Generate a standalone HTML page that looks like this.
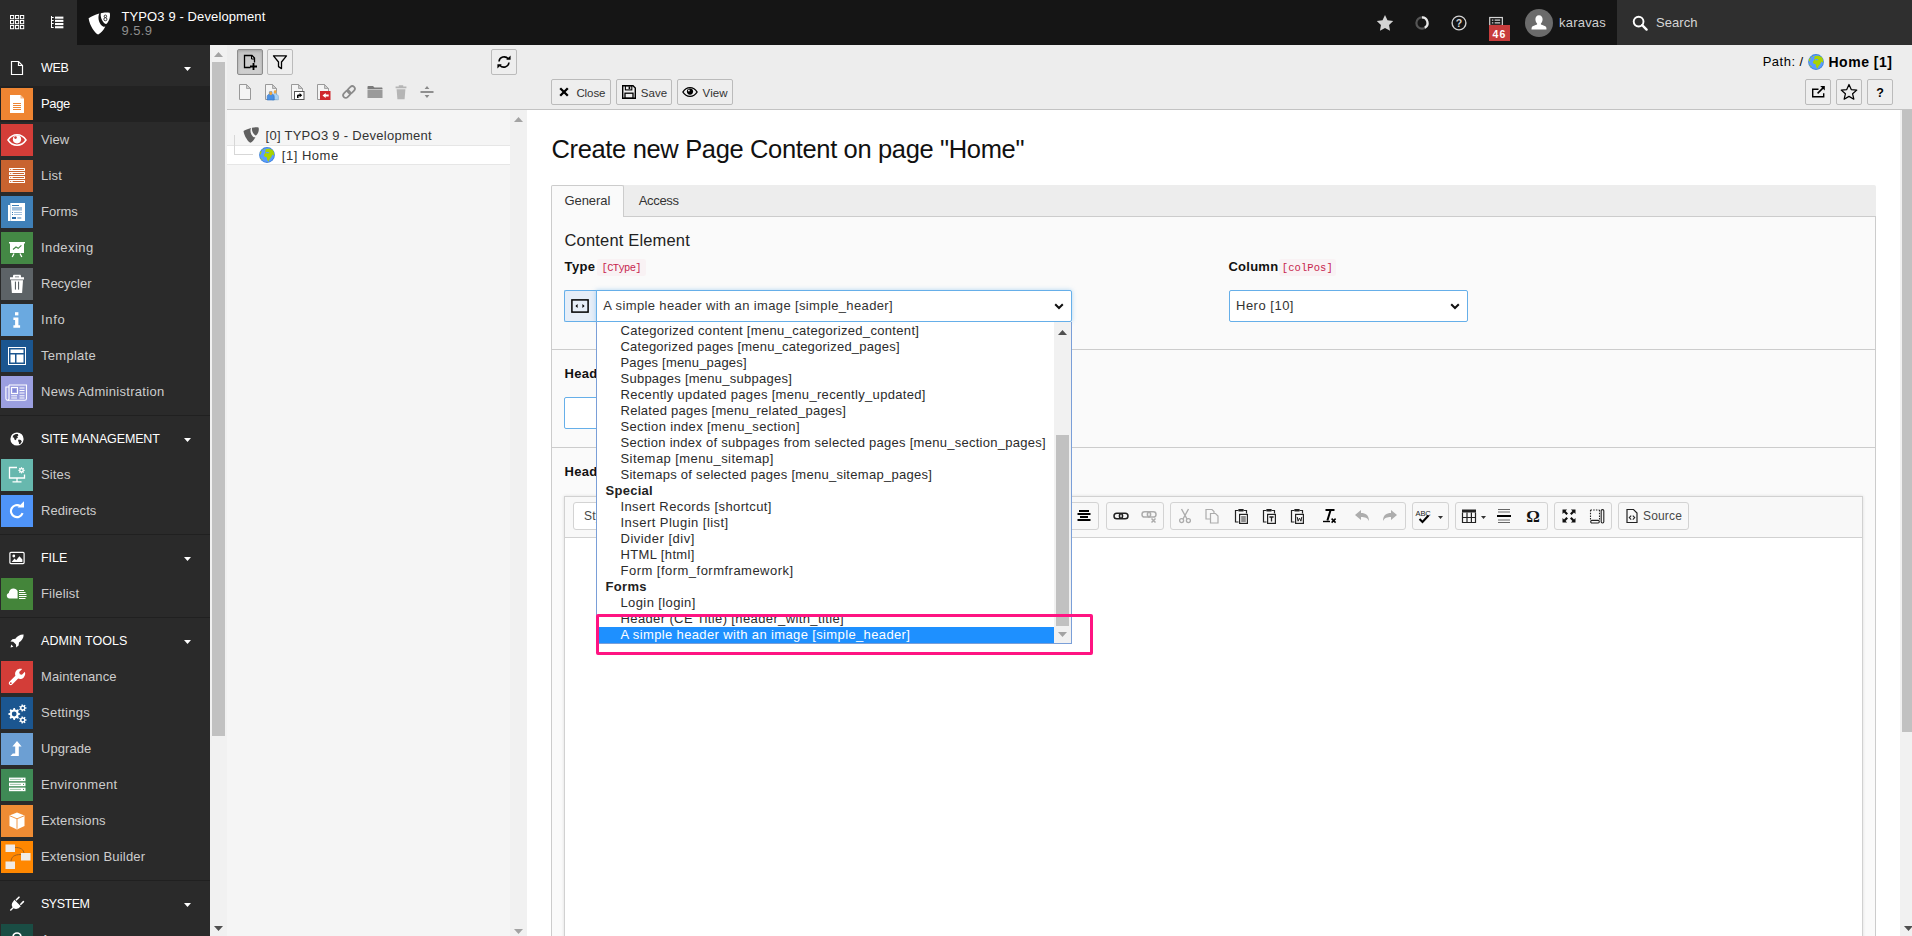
<!DOCTYPE html>
<html><head><meta charset="utf-8"><title>TYPO3</title><style>
*{box-sizing:border-box;margin:0;padding:0}
html,body{width:1912px;height:936px;overflow:hidden;background:#fff}
body{font-family:"Liberation Sans", sans-serif;font-size:13px;color:#333;position:relative}
.a{position:absolute}
.t{position:absolute;white-space:nowrap;line-height:16px;height:16px;font-size:13px}
.b{font-weight:bold}
svg{position:absolute;overflow:visible}
.btn{position:absolute;height:26px;border:1px solid #bbb;border-radius:2px;background:#eee}
.mono{font-family:"Liberation Mono",monospace}
</style></head><body>
<div class="a" style="left:0px;top:0px;width:1912px;height:45px;background:#151515"></div>
<div class="a" style="left:0px;top:0px;width:77px;height:45px;background:#2a2a2a"></div>
<div class="a" style="left:1617px;top:0px;width:295px;height:45px;background:#2f2f2f"></div>
<svg style="left:10px;top:15px;" width="14" height="14" viewBox="0 0 14 14"><rect x="0.5" y="0.5" width="3.2" height="3.2" fill="none" stroke="#fff" stroke-width="1"></rect><rect x="0.5" y="5.5" width="3.2" height="3.2" fill="none" stroke="#fff" stroke-width="1"></rect><rect x="0.5" y="10.5" width="3.2" height="3.2" fill="none" stroke="#fff" stroke-width="1"></rect><rect x="5.5" y="0.5" width="3.2" height="3.2" fill="none" stroke="#fff" stroke-width="1"></rect><rect x="5.5" y="5.5" width="3.2" height="3.2" fill="none" stroke="#fff" stroke-width="1"></rect><rect x="5.5" y="10.5" width="3.2" height="3.2" fill="none" stroke="#fff" stroke-width="1"></rect><rect x="10.5" y="0.5" width="3.2" height="3.2" fill="none" stroke="#fff" stroke-width="1"></rect><rect x="10.5" y="5.5" width="3.2" height="3.2" fill="none" stroke="#fff" stroke-width="1"></rect><rect x="10.5" y="10.5" width="3.2" height="3.2" fill="none" stroke="#fff" stroke-width="1"></rect></svg>
<svg style="left:50px;top:15px;" width="14" height="14" viewBox="0 0 14 14"><path d="M1.5 1v12M1.5 2.5h2.2M1.5 5.5h2.2M1.5 8.5h2.2M1.5 12.5h2.2" stroke="#fff" stroke-width="1" fill="none"></path><rect x="5" y="1.6" width="8.4" height="2.1" fill="#fff"></rect><rect x="5" y="4.8" width="8.4" height="2.1" fill="#fff"></rect><rect x="5" y="8" width="8.4" height="2.1" fill="#fff"></rect><rect x="5" y="11.2" width="8.4" height="2.1" fill="#fff"></rect></svg>
<svg style="left:88px;top:12px;" width="23" height="23" viewBox="0 0 23 23"><path d="M0.6 6.2C3 4.6 7 3 11.3 1.6C9.6 5 10.6 10.6 13.6 13.4C15 14.7 16.2 15 17.3 14.6C15.6 18.2 12.6 21.6 10.2 22.6C7.4 21.6 1.6 13.8 0.6 6.2z" fill="#fff"></path><path d="M12.8 1.2C15.2 0.4 19 0.2 21.6 0.8C22.8 3.4 21.4 9.6 18.2 12C15.4 11.6 12 6.2 12.8 1.2z" fill="#fff"></path><circle cx="17.4" cy="4.3" r="1.25" fill="none" stroke="#222" stroke-width=".9"></circle><circle cx="17.4" cy="7.2" r="1.55" fill="none" stroke="#222" stroke-width=".9"></circle></svg>
<span class="t " style="left: 121.5px; top: 8.5px; color: rgb(255, 255, 255); letter-spacing: 0.11px;">TYPO3 9 - Development</span>
<span class="t " style="left: 121.5px; top: 22.5px; color: rgb(142, 142, 142); letter-spacing: 0.42px;">9.5.9</span>
<svg style="left:1376px;top:13.5px;" width="18" height="18" viewBox="0 0 16 16"><path d="M8 .8l2.2 4.7 5.1.7-3.7 3.6.9 5.1L8 12.5l-4.5 2.4.9-5.1L.7 6.2l5.1-.7z" fill="#d4d4d4"></path></svg>
<svg style="left:1414px;top:15px;" width="16" height="16" viewBox="0 0 16 16"><circle cx="8" cy="8" r="5.6" fill="none" stroke="#555" stroke-width="2.2"></circle><path d="M8 2.4A5.6 5.6 0 0 1 10.8 12.8" fill="none" stroke="#e8e8e8" stroke-width="2.2"></path></svg>
<svg style="left:1451px;top:15px;" width="16" height="16" viewBox="0 0 16 16"><circle cx="8" cy="8" r="6.9" fill="none" stroke="#d4d4d4" stroke-width="1.4"></circle><text x="8" y="11.6" font-size="10.5" font-weight="bold" font-family="Liberation Sans" text-anchor="middle" fill="#d4d4d4">?</text></svg>
<svg style="left:1488.5px;top:15px;" width="15" height="13" viewBox="0 0 16 14"><rect x=".7" y="2.7" width="13.6" height="8.6" fill="none" stroke="#d4d4d4" stroke-width="1.3"></rect><path d="M3 5.5h1.6M6 5.5h6M3 8.5h1.6M6 8.5h6" stroke="#d4d4d4" stroke-width="1.3"></path></svg>
<div class="a" style="left:1489px;top:25px;width:21px;height:16px;background:#c83c3c"></div>
<span class="t b" style="left: 1492.5px; top: 25.5px; color: rgb(255, 255, 255); font-size: 10.5px; letter-spacing: 1.16px;">46</span>
<svg style="left:1525px;top:9px;" width="28" height="28" viewBox="0 0 28 28"><circle cx="14" cy="14" r="14" fill="#6b6b6b"></circle><path d="M14 6.2c2.3 0 3.6 1.7 3.6 4 0 1.8-.8 3.4-1.7 4.2v1.2c1.8.6 4.8 1.6 5.3 2.6.3.8.3 2.4.3 2.4H6.500000000000001s0-1.600000000000001.3-2.4c.5-1 3.5-2 5.3-2.6v-1.2c-.9-.8-1.7-2.4-1.7-4.2 0-2.3 1.3-4 3.6-4z" fill="#fff"></path></svg>
<span class="t " style="left: 1559px; top: 15px; color: rgb(208, 208, 208); letter-spacing: 0.21px;">karavas</span>
<svg style="left:1632px;top:15px;" width="16" height="16" viewBox="0 0 16 16"><circle cx="6.6" cy="6.6" r="4.9" fill="none" stroke="#fff" stroke-width="1.9"></circle><path d="M10.2 10.2L14.6 14.6" stroke="#fff" stroke-width="2.4" stroke-linecap="round"></path></svg>
<span class="t " style="left: 1656px; top: 15px; color: rgb(214, 214, 214); letter-spacing: 0.05px;">Search</span>
<div class="a" style="left:0px;top:45px;width:210px;height:891px;background:#2a2a2a"></div>
<div class="a" style="left:0px;top:86px;width:210px;height:36px;background:#222"></div>
<div class="a" style="left:210px;top:45px;width:17px;height:891px;background:#f1f1f1"></div>
<div class="a" style="left:212px;top:62px;width:13px;height:674px;background:#c1c1c1"></div>
<svg style="left:214.0px;top:51.5px;" width="9" height="5" viewBox="0 0 9 5"><path d="M0 5L4.5 0L9 5z" fill="#a3a3a3"></path></svg>
<svg style="left:214.0px;top:925.5px;" width="9" height="5" viewBox="0 0 9 5"><path d="M0 0L9 0L4.5 5z" fill="#505050"></path></svg>
<svg style="left:9px;top:60px;" width="16" height="16" viewBox="0 0 16 16"><path d="M2.5 1.5h7l4 4v9h-11z" fill="none" stroke="#fff" stroke-width="1.2"></path><path d="M9.5 1.5v4h4" fill="none" stroke="#fff" stroke-width="1.2"></path></svg>
<span class="t " style="left: 41px; top: 60px; font-size: 12.5px; color: rgb(255, 255, 255); letter-spacing: -0.29px;">WEB</span>
<svg style="left:184.0px;top:66.5px;" width="7" height="4" viewBox="0 0 7 4"><path d="M0 0L7 0L3.5 4z" fill="#fff"></path></svg>
<svg style="left:1px;top:88px" width="32" height="32" viewBox="0 0 32 32"><rect width="32" height="32" fill="#ef8532"></rect><path d="M9 7h10.5l3.5 3.5v14.500000000000002h-14.000000000000002z" fill="#fff"></path><path d="M19.5 7v3.5h3.5z" fill="#f6b98a"></path><rect x="12" y="15" width="8" height="1" fill="#ef8532"></rect><rect x="12" y="17" width="8" height="1" fill="#ef8532"></rect><rect x="12" y="19" width="8" height="1" fill="#ef8532"></rect><rect x="12" y="21" width="8" height="1" fill="#ef8532"></rect></svg>
<span class="t " style="left: 41px; top: 96px; color: rgb(255, 255, 255); letter-spacing: -0.34px;">Page</span>
<svg style="left:1px;top:124px" width="32" height="32" viewBox="0 0 32 32"><rect width="32" height="32" fill="#d33d38"></rect><path d="M7 16c2.4-3.6 5.4-5.2 9-5.2s6.6 1.6 9 5.2c-2.400000000000002 3.6-5.4 5.2-9 5.2s-6.6-1.6-9-5.2z" fill="none" stroke="#fff" stroke-width="1.5"></path><circle cx="16" cy="15.3" r="4.1" fill="#fff"></circle><circle cx="14.5" cy="13.6" r="1.3" fill="#d33d38"></circle></svg>
<span class="t " style="left: 41px; top: 132px; color: rgb(205, 205, 205); letter-spacing: 0.04px;">View</span>
<svg style="left:1px;top:160px" width="32" height="32" viewBox="0 0 32 32"><rect width="32" height="32" fill="#c8632f"></rect><rect x="8" y="8" width="16" height="3" rx=".5" fill="#fff"></rect><rect x="11.6" y="9" width="11.4" height="1" fill="#c8632f"></rect><rect x="9.2" y="9" width="1" height="1" fill="#c8632f"></rect><rect x="8" y="12" width="16" height="3" rx=".5" fill="#fff"></rect><rect x="11.6" y="13" width="11.4" height="1" fill="#c8632f"></rect><rect x="9.2" y="13" width="1" height="1" fill="#c8632f"></rect><rect x="8" y="16" width="16" height="3" rx=".5" fill="#fff"></rect><rect x="11.6" y="17" width="11.4" height="1" fill="#c8632f"></rect><rect x="9.2" y="17" width="1" height="1" fill="#c8632f"></rect><rect x="8" y="20" width="16" height="3" rx=".5" fill="#fff"></rect><rect x="11.6" y="21" width="11.4" height="1" fill="#c8632f"></rect><rect x="9.2" y="21" width="1" height="1" fill="#c8632f"></rect></svg>
<span class="t " style="left: 41px; top: 168px; color: rgb(205, 205, 205); letter-spacing: 0.22px;">List</span>
<svg style="left:1px;top:196px" width="32" height="32" viewBox="0 0 32 32"><rect width="32" height="32" fill="#3f80b8"></rect><rect x="7" y="9" width="2" height="16" fill="#fff"></rect><rect x="9.3" y="7" width="14.7" height="18" fill="#fff"></rect><rect x="11" y="9" width="7" height="1" fill="#3f80b8"></rect><rect x="11" y="11" width="10" height="3.6" fill="#a3c1dd"></rect><rect x="11" y="16" width="1" height="1" fill="#3f80b8"></rect><rect x="13" y="16" width="8" height="1" fill="#a3c1dd"></rect><rect x="11" y="18" width="1" height="1" fill="#3f80b8"></rect><rect x="13" y="18" width="8" height="1" fill="#a3c1dd"></rect><rect x="11" y="21" width="4" height="2" fill="#2a6aa6"></rect><rect x="16.3" y="21" width="4" height="2" fill="#a3c1dd"></rect></svg>
<span class="t " style="left: 41px; top: 204px; color: rgb(205, 205, 205); letter-spacing: 0.01px;">Forms</span>
<svg style="left:1px;top:232px" width="32" height="32" viewBox="0 0 32 32"><rect width="32" height="32" fill="#448845"></rect><g transform="translate(0 1)"><rect x="8" y="9" width="16" height="1.5" fill="#fff"></rect><rect x="9" y="10" width="14" height="10" fill="#fff"></rect><path d="M12 16.5l3-2.5 2.2 1.3 3.2-3" fill="none" stroke="#448845" stroke-width="1.1"></path><path d="M13 20.5l-1.8 3.5M19 20.5l1.8 3.5" stroke="#fff" stroke-width="1.3"></path></g></svg>
<span class="t " style="left: 41px; top: 240px; color: rgb(205, 205, 205); letter-spacing: 0.43px;">Indexing</span>
<svg style="left:1px;top:268px" width="32" height="32" viewBox="0 0 32 32"><rect width="32" height="32" fill="#5d6367"></rect><path d="M12 8.2c0-.9.6-1.400000000000001 1.4-1.400000000000001h5.2c.8 0 1.400000000000001.5 1.400000000000001 1.400000000000001v1h3v2.2h-14.000000000000002v-2.200000000000001h3zM14 9.2h4v-.8h-4zM10 12.3h12l-.9 12.700000000000001h-10.2z" fill="#fff"></path><rect x="13.9" y="13.6" width="1.1" height="8" fill="#5d6367"></rect><rect x="17" y="13.6" width="1.1" height="8" fill="#5d6367"></rect></svg>
<span class="t " style="left: 41px; top: 276px; color: rgb(205, 205, 205); letter-spacing: -0.01px;">Recycler</span>
<svg style="left:1px;top:304px" width="32" height="32" viewBox="0 0 32 32"><rect width="32" height="32" fill="#6aa9e0"></rect><rect x="14" y="8.2" width="3.4" height="3.2" fill="#fff"></rect><path d="M12.4 13.4h5v7.8h1.7v2.6h-6.7v-2.6h1.7v-5.200000000000001h-1.700000000000001z" fill="#fff"></path></svg>
<span class="t " style="left: 41px; top: 312px; color: rgb(205, 205, 205); letter-spacing: 0.68px;">Info</span>
<svg style="left:1px;top:340px" width="32" height="32" viewBox="0 0 32 32"><rect width="32" height="32" fill="#1b5690"></rect><rect x="7.500000000000001" y="7.500000000000001" width="17" height="17" fill="none" stroke="#fff" stroke-width="1"></rect><rect x="9.500000000000002" y="9.500000000000002" width="13" height="3.5" fill="#fff"></rect><rect x="9.500000000000002" y="14.5" width="4.5" height="8" fill="#fff"></rect><rect x="15.5" y="14.5" width="7" height="8" fill="#fff"></rect></svg>
<span class="t " style="left: 41px; top: 348px; color: rgb(205, 205, 205); letter-spacing: 0.28px;">Template</span>
<svg style="left:1px;top:376px" width="32" height="32" viewBox="0 0 32 32"><rect width="32" height="32" fill="#9b9fe0"></rect><path d="M8 9h17.5v13.500000000000002c0 1-.8 1.8-1.8 1.8h-17c-1 0-1.8-.8-1.8-1.8v-11.500000000000002h3" fill="none" stroke="#fff" stroke-width="1.1"></path><path d="M8 9v13.800000000000002c0 .8-.6 1.400000000000001-1.400000000000001 1.400000000000001" fill="none" stroke="#fff" stroke-width="1.1"></path><rect x="10.5" y="11.5" width="6" height="6" fill="none" stroke="#fff" stroke-width="1.1"></rect><rect x="12" y="13" width="3" height="3" fill="#8388d8"></rect><path d="M18.5 12h5M18.5 14.5h5M18.5 17h5M10.2 19.800000000000002h5.8M18.5 19.800000000000002h5M10.2 22h5.8M18.5 22h5" stroke="#fff" stroke-width="1"></path></svg>
<span class="t " style="left: 41px; top: 384px; color: rgb(205, 205, 205); letter-spacing: 0.3px;">News Administration</span>
<div class="a" style="left:0px;top:415px;width:210px;height:1px;background:#202020"></div>
<svg style="left:9px;top:431px;" width="16" height="16" viewBox="0 0 16 16"><circle cx="8" cy="8" r="6.6" fill="#fff"></circle><path d="M4.2 4.6c1.2-1.4 3-2 4.6-1.6l.6 1.400000000000001-1.2 1 .8 1.400000000000001-1.6.6-.4 1.8-1.600000000000001-.8-.4-1.6-1.400000000000001-.6zM9.6 8.6l2.200000000000001.4 1 1.6-1.400000000000001 2.2-1.4.4-.2-2.2-.8-1z" fill="#2a2a2a"></path></svg>
<span class="t " style="left: 41px; top: 431px; font-size: 12.5px; color: rgb(255, 255, 255); letter-spacing: -0.14px;">SITE MANAGEMENT</span>
<svg style="left:184.0px;top:437.5px;" width="7" height="4" viewBox="0 0 7 4"><path d="M0 0L7 0L3.5 4z" fill="#fff"></path></svg>
<svg style="left:1px;top:459px" width="32" height="32" viewBox="0 0 32 32"><rect width="32" height="32" fill="#67b8ae"></rect><path d="M16 8.5h-7.500000000000001v10.5h15v-3.6" fill="none" stroke="#fff" stroke-width="1.3"></path><path d="M16 19v3.6M11.5 22.900000000000002h9" fill="none" stroke="#fff" stroke-width="1.3"></path><circle cx="20.5" cy="11.3" r="1.7" fill="none" stroke="#fff" stroke-width="1.3"></circle><path d="M22.30 11.30L23.60 11.30" stroke="#fff" stroke-width="1.2"></path><path d="M21.77 12.57L22.69 13.49" stroke="#fff" stroke-width="1.2"></path><path d="M20.50 13.10L20.50 14.40" stroke="#fff" stroke-width="1.2"></path><path d="M19.23 12.57L18.31 13.49" stroke="#fff" stroke-width="1.2"></path><path d="M18.70 11.30L17.40 11.30" stroke="#fff" stroke-width="1.2"></path><path d="M19.23 10.03L18.31 9.11" stroke="#fff" stroke-width="1.2"></path><path d="M20.50 9.50L20.50 8.20" stroke="#fff" stroke-width="1.2"></path><path d="M21.77 10.03L22.69 9.11" stroke="#fff" stroke-width="1.2"></path></svg>
<span class="t " style="left: 41px; top: 467px; color: rgb(205, 205, 205); letter-spacing: 0.12px;">Sites</span>
<svg style="left:1px;top:495px" width="32" height="32" viewBox="0 0 32 32"><rect width="32" height="32" fill="#4f94f8"></rect><path d="M19.4 11.2A6 6 0 1 0 21.6 18.2" fill="none" stroke="#fff" stroke-width="2.1"></path><path d="M16.6 12.6h6.4v-6.4z" fill="#fff" transform="rotate(0 20 10)"></path></svg>
<span class="t " style="left: 41px; top: 503px; color: rgb(205, 205, 205); letter-spacing: 0.05px;">Redirects</span>
<div class="a" style="left:0px;top:534px;width:210px;height:1px;background:#202020"></div>
<svg style="left:9px;top:550px;" width="16" height="16" viewBox="0 0 16 16"><rect x=".9" y="2.4" width="14.2" height="11.2" rx="1" fill="none" stroke="#fff" stroke-width="1.2"></rect><circle cx="4.8" cy="6" r="1.4" fill="#fff"></circle><path d="M2.6 12l3-3.4 1.600000000000001 1.600000000000001 3.2-4 3 3.4v2.4z" fill="#fff"></path></svg>
<span class="t " style="left: 41px; top: 550px; font-size: 12.5px; color: rgb(255, 255, 255); letter-spacing: -0.03px;">FILE</span>
<svg style="left:184.0px;top:556.5px;" width="7" height="4" viewBox="0 0 7 4"><path d="M0 0L7 0L3.5 4z" fill="#fff"></path></svg>
<svg style="left:1px;top:578px" width="32" height="32" viewBox="0 0 32 32"><rect width="32" height="32" fill="#44853a"></rect><path d="M8.6 20.6c-1.6 0-2.800000000000001-1.2-2.800000000000001-2.800000000000001 0-1.3.8-2.3 2-2.700000000000001.2-2.6 2.200000000000001-4.5 4.7-4.5 1.8 0 3.3 1 4.1 2.4v7.600000000000001z" fill="#fff"></path><path d="M18 12.5h5M18 14.5h6.5M18 16.5h7.5M18 18.5h7.5M18 20.5h6.5" stroke="#fff" stroke-width="1"></path></svg>
<span class="t " style="left: 41px; top: 586px; color: rgb(205, 205, 205); letter-spacing: 0.18px;">Filelist</span>
<div class="a" style="left:0px;top:617px;width:210px;height:1px;background:#202020"></div>
<svg style="left:9px;top:633px;" width="16" height="16" viewBox="0 0 16 16"><path d="M14.6 1.4c-3.400000000000001-.2-6.4 1.6-8.2 4.4l-3 .4-2 2.4 2.8.2 2.800000000000001 2.800000000000001.2 2.8 2.400000000000001-2 .4-3c2.8-1.8 4.8-4.6 4.6-8z" fill="#fff"></path><path d="M1.6 14.4l.6-2.8 2.200000000000001 2.200000000000001z" fill="#fff"></path></svg>
<span class="t " style="left: 41px; top: 633px; font-size: 12.5px; color: rgb(255, 255, 255); letter-spacing: 0.07px;">ADMIN TOOLS</span>
<svg style="left:184.0px;top:639.5px;" width="7" height="4" viewBox="0 0 7 4"><path d="M0 0L7 0L3.5 4z" fill="#fff"></path></svg>
<svg style="left:1px;top:661px" width="32" height="32" viewBox="0 0 32 32"><rect width="32" height="32" fill="#d33d38"></rect><path d="M23.900000000000002 10.8l-3 3-2.1-.6-.6-2.1 3-3c-2-.7-4.2-.2-5.600000000000001 1.2-1.5 1.5-1.9 3.6-1.2 5.500000000000001l-6 6c-.8.8-.8 2 0 2.800000000000001.8.8 2 .8 2.800000000000001 0l6-6c1.9.7 4 .3 5.500000000000001-1.2 1.4-1.5 1.900000000000001-3.700000000000001 1.2-5.600000000000001z" fill="#fff"></path><circle cx="9.8" cy="22.200000000000003" r=".9" fill="#d33d38"></circle></svg>
<span class="t " style="left: 41px; top: 669px; color: rgb(205, 205, 205); letter-spacing: 0.11px;">Maintenance</span>
<svg style="left:1px;top:697px" width="32" height="32" viewBox="0 0 32 32"><rect width="32" height="32" fill="#1b5690"></rect><path d="M19.17 16.41L19.17 17.59L17.41 18.28L17.08 19.07L17.84 20.81L17.01 21.64L15.27 20.88L14.48 21.21L13.79 22.97L12.61 22.97L11.92 21.21L11.13 20.88L9.39 21.64L8.56 20.81L9.32 19.07L8.99 18.28L7.23 17.59L7.23 16.41L8.99 15.72L9.32 14.93L8.56 13.19L9.39 12.36L11.13 13.12L11.92 12.79L12.61 11.03L13.79 11.03L14.48 12.79L15.27 13.12L17.01 12.36L17.84 13.19L17.08 14.93L17.41 15.72z" fill="#fff"></path><circle cx="13.2" cy="17" r="2.4" fill="#1b5690"></circle><path d="M25.58 10.57L25.58 11.43L24.25 11.86L24.00 12.38L24.49 13.69L23.82 14.22L22.66 13.45L22.09 13.58L21.37 14.78L20.54 14.59L20.42 13.20L19.96 12.84L18.58 13.02L18.21 12.26L19.22 11.29L19.22 10.71L18.21 9.74L18.58 8.98L19.96 9.16L20.42 8.80L20.54 7.41L21.37 7.22L22.09 8.42L22.66 8.55L23.82 7.78L24.49 8.31L24.00 9.62L24.25 10.14z" fill="#fff"></path><circle cx="21.8" cy="11" r="1.3" fill="#1b5690"></circle><path d="M25.58 22.57L25.58 23.43L24.25 23.86L24.00 24.38L24.49 25.69L23.82 26.22L22.66 25.45L22.09 25.58L21.37 26.78L20.54 26.59L20.42 25.20L19.96 24.84L18.58 25.02L18.21 24.26L19.22 23.29L19.22 22.71L18.21 21.74L18.58 20.98L19.96 21.16L20.42 20.80L20.54 19.41L21.37 19.22L22.09 20.42L22.66 20.55L23.82 19.78L24.49 20.31L24.00 21.62L24.25 22.14z" fill="#fff"></path><circle cx="21.8" cy="23" r="1.3" fill="#1b5690"></circle></svg>
<span class="t " style="left: 41px; top: 705px; color: rgb(205, 205, 205); letter-spacing: 0.25px;">Settings</span>
<svg style="left:1px;top:733px" width="32" height="32" viewBox="0 0 32 32"><rect width="32" height="32" fill="#6c9fd3"></rect><path d="M16 8l4.600000000000001 5.4h-2.800000000000001v9.600000000000001h-8.4l2.4-2.600000000000001h2.4v-7h-2.800000000000001z" fill="#fff"></path></svg>
<span class="t " style="left: 41px; top: 741px; color: rgb(205, 205, 205); letter-spacing: 0.05px;">Upgrade</span>
<svg style="left:1px;top:769px" width="32" height="32" viewBox="0 0 32 32"><rect width="32" height="32" fill="#3f8a55"></rect><rect x="8" y="8.6" width="16.5" height="3.6" fill="#fff"></rect><rect x="9" y="9.9" width="11" height="1" fill="#9fc5aa"></rect><rect x="22" y="9.9" width="1" height="1" fill="#3f8a55"></rect><rect x="8" y="13.600000000000001" width="16.5" height="3.6" fill="#fff"></rect><rect x="9" y="14.900000000000002" width="11" height="1" fill="#9fc5aa"></rect><rect x="22" y="14.900000000000002" width="1" height="1" fill="#3f8a55"></rect><rect x="8" y="18.6" width="16.5" height="3.6" fill="#fff"></rect><rect x="9" y="19.900000000000002" width="11" height="1" fill="#9fc5aa"></rect><rect x="22" y="19.900000000000002" width="1" height="1" fill="#3f8a55"></rect></svg>
<span class="t " style="left: 41px; top: 777px; color: rgb(205, 205, 205); letter-spacing: 0.32px;">Environment</span>
<svg style="left:1px;top:805px" width="32" height="32" viewBox="0 0 32 32"><rect width="32" height="32" fill="#ef8c34"></rect><path d="M16 7.500000000000001l7.500000000000001 3v10.5l-7.500000000000001 3.5-7.500000000000001-3.5v-10.5z" fill="#fff"></path><path d="M8.8 10.8l7.200000000000001 3 7.200000000000001-3M16 13.8v10" fill="none" stroke="#ef8c34" stroke-width=".9"></path></svg>
<span class="t " style="left: 41px; top: 813px; color: rgb(205, 205, 205); letter-spacing: 0.1px;">Extensions</span>
<svg style="left:1px;top:841px" width="32" height="32" viewBox="0 0 32 32"><rect width="32" height="32" fill="#ff8700"></rect><path d="M13 6.500000000000001c6.5-.5 10 2 10 6.500000000000001M10 21c0-5 3-7.500000000000001 10-7.500000000000001" fill="none" stroke="#a3611c" stroke-width="1"></path><rect x="4.5" y="3.5" width="9.5" height="7.5" fill="#f0ebe6"></rect><rect x="20" y="12" width="9.5" height="7.5" fill="#f0ebe6"></rect><rect x="4.5" y="20.5" width="9.5" height="7.5" fill="#f0ebe6"></rect></svg>
<span class="t " style="left: 41px; top: 849px; color: rgb(205, 205, 205); letter-spacing: 0.18px;">Extension Builder</span>
<div class="a" style="left:0px;top:880px;width:210px;height:1px;background:#202020"></div>
<svg style="left:9px;top:896px;" width="16" height="16" viewBox="0 0 16 16"><path d="M10 1.2l-2.6 2.6M14.4 5.6l-2.600000000000001 2.600000000000001" stroke="#fff" stroke-width="1.6" stroke-linecap="round"></path><path d="M5.4 3.8l6.4 6.4-1.400000000000001 1.4c-1.8 1.8-4.2 1.8-5.8.6l-2.800000000000001 2.800000000000001-1-1 2.800000000000001-2.800000000000001c-1.2-1.6-1.2-4 .6-5.8z" fill="#fff"></path></svg>
<span class="t " style="left: 41px; top: 896px; font-size: 12.5px; color: rgb(255, 255, 255); letter-spacing: -0.5px;">SYSTEM</span>
<svg style="left:184.0px;top:902.5px;" width="7" height="4" viewBox="0 0 7 4"><path d="M0 0L7 0L3.5 4z" fill="#fff"></path></svg>
<svg style="left:1px;top:924px" width="32" height="32" viewBox="0 0 32 32"><rect width="32" height="32" fill="#1a4d44"></rect><circle cx="16" cy="13" r="4" fill="none" stroke="#fff" stroke-width="1.6"></circle></svg>
<span class="t " style="left: 41px; top: 932px; color: rgb(205, 205, 205); letter-spacing: -0.32px;">Access</span>
<div class="a" style="left:227px;top:45px;width:300px;height:65px;background:#ededed"></div>
<div class="a" style="left:227px;top:109px;width:300px;height:1px;background:#c3c3c3"></div>
<div class="a" style="left:227px;top:110px;width:283px;height:826px;background:#f5f5f5"></div>
<div class="a" style="left:510px;top:110px;width:17px;height:826px;background:#f1f1f1"></div>
<svg style="left:514.0px;top:116.5px;" width="9" height="5" viewBox="0 0 9 5"><path d="M0 5L4.5 0L9 5z" fill="#a3a3a3"></path></svg>
<svg style="left:514.0px;top:928.5px;" width="9" height="5" viewBox="0 0 9 5"><path d="M0 0L9 0L4.5 5z" fill="#a3a3a3"></path></svg>
<div class="a" style="left:237px;top:49px;width:26px;height:26px;border:1px solid #8c8c8c;border-radius:2px;background:linear-gradient(#c6c6c6,#d0d0d0);box-shadow:inset 0 1px 3px rgba(0,0,0,.2)"></div>
<div class="a" style="left:267px;top:49px;width:26px;height:26px;border:1px solid #bbb;border-radius:2px;background:#eee"></div>
<div class="a" style="left:491px;top:49px;width:26px;height:26px;border:1px solid #bbb;border-radius:2px;background:#eee"></div>
<svg style="left:242px;top:54px;" width="16" height="16" viewBox="0 0 16 16"><path d="M8.5 13.5h-6v-12.000000000000002h7.500000000000001l2.500000000000001 2.500000000000001v4.5" fill="none" stroke="#000" stroke-width="1.3"></path><path d="M9.5 1.5v3.5h3" fill="none" stroke="#000" stroke-width="1"></path><path d="M11.5 9v7.000000000000001M8 12.5h7.000000000000001" stroke="#000" stroke-width="1.8"></path></svg>
<svg style="left:272px;top:54px;" width="16" height="16" viewBox="0 0 16 16"><path d="M1.5 1.8h13l-5 6.2v6.6l-3-2v-4.6z" fill="none" stroke="#000" stroke-width="1.3" stroke-linejoin="round"></path></svg>
<svg style="left:496px;top:54px;" width="16" height="16" viewBox="0 0 16 16"><path d="M3 7.500000000000001A5.2 5.2 0 0 1 12.2 4.8M13 8.5A5.2 5.2 0 0 1 3.8 11.2" fill="none" stroke="#000" stroke-width="1.6"></path><path d="M10.2 5.800000000000001h4.4v-4.4zM5.800000000000001 10.2h-4.4v4.4z" fill="#000"></path></svg>
<svg style="left:237px;top:84px;" width="16" height="16" viewBox="0 0 16 16"><path d="M2.5 .5h7l4 4v11h-11z" fill="#f4f4f4" stroke="#999" stroke-width="1"></path><path d="M9.5 .5v4h4z" fill="#ccc" stroke="#999" stroke-width=".8"></path></svg>
<svg style="left:263px;top:84px;" width="16" height="16" viewBox="0 0 16 16"><path d="M2.5 .5h7l4 4v11h-11z" fill="#f4f4f4" stroke="#999" stroke-width="1"></path><path d="M9.5 .5v4h4z" fill="#ccc" stroke="#999" stroke-width=".8"></path><path d="M9 15.8v-3.200000000000001c0-1.400000000000001 1-2 2-2.200000000000001v-3h2.4v3c1 .2 2 .8 2 2.200000000000001v3.200000000000001z" fill="#a9d3f5" stroke="#7aa7cf" stroke-width=".6"></path><rect x="11" y="6.2" width="2.4" height="3.2" rx="1" fill="#f2a73b"></rect><path d="M4.2 16v-3.400000000000001c0-1.400000000000001 1-2.200000000000001 2.200000000000001-2.400000000000001v-2.400000000000001h2.6v2.400000000000001c1.2.2 2.200000000000001 1 2.200000000000001 2.400000000000001v3.400000000000001z" fill="#4a90e2" stroke="#2f6fc0" stroke-width=".6"></path><rect x="6.4" y="7.4" width="2.6" height="3.6" rx="1.1" fill="#f2a73b"></rect></svg>
<svg style="left:289px;top:84px;" width="16" height="16" viewBox="0 0 16 16"><path d="M2.5 .5h7l4 4v11h-11z" fill="#f4f4f4" stroke="#999" stroke-width="1"></path><path d="M9.5 .5v4h4z" fill="#ccc" stroke="#999" stroke-width=".8"></path><rect x="5.5" y="7.500000000000001" width="9.5" height="8" fill="#fff" stroke="#555" stroke-width="1"></rect><path d="M8 14v-2.200000000000001c0-.8.6-1.400000000000001 1.400000000000001-1.400000000000001h1.2v-1.400000000000001l2.600000000000001 2.200000000000001-2.600000000000001 2.200000000000001v-1.400000000000001h-1v2z" fill="#000"></path></svg>
<svg style="left:315px;top:84px;" width="16" height="16" viewBox="0 0 16 16"><path d="M2.5 .5h7l4 4v11h-11z" fill="#f4f4f4" stroke="#999" stroke-width="1"></path><path d="M9.5 .5v4h4z" fill="#ccc" stroke="#999" stroke-width=".8"></path><rect x="5" y="7" width="10.5" height="9" fill="#d0262c"></rect><path d="M7.500000000000001 11.5l3.2-2.600000000000001v1.6h3v2h-3v1.6z" fill="#fff"></path></svg>
<svg style="left:341px;top:84px;" width="16" height="16" viewBox="0 0 16 16"><g transform="rotate(-45 8 8)" fill="none" stroke="#8a8a8a" stroke-width="1.7"><rect x=".8" y="5.4" width="8" height="5.2" rx="2.6"></rect><rect x="7.2" y="5.4" width="8" height="5.2" rx="2.6"></rect></g></svg>
<svg style="left:367px;top:84px;" width="16" height="16" viewBox="0 0 16 16"><path d="M.5 3c0-.6.4-1 1-1h4.5l1.5 1.5h7c.6 0 1 .4 1 1v.8h-15z" fill="#7b7b7b"></path><rect x=".5" y="5.800000000000001" width="15" height="8.2" fill="#9a9a9a"></rect></svg>
<svg style="left:393px;top:84px;" width="16" height="16" viewBox="0 0 16 16"><path d="M5.800000000000001 1.2h4.4v1.3h3.2v1.8h-10.8v-1.8h3.2zM3.6 5.2h8.8l-.8 10h-7.200000000000001z" fill="#b5b5b5"></path></svg>
<svg style="left:419px;top:84px;" width="16" height="16" viewBox="0 0 16 16"><path d="M1.5 8h13" stroke="#666" stroke-width="1.4"></path><path d="M5.6 5l2.4-3 2.4 3zM5.6 11l2.4 3 2.4-3z" fill="#8a8a8a"></path></svg>
<div class="a" style="left:227px;top:145px;width:283px;height:20px;background:#fff;border-top:1px solid #e6e6e6;border-bottom:1px solid #e6e6e6"></div>
<div class="a" style="left:234px;top:135px;width:1px;height:20px;background:#d7d7d7"></div>
<div class="a" style="left:234px;top:154px;width:19px;height:1px;background:#d7d7d7"></div>
<svg style="left:243px;top:127px;" width="17" height="16" viewBox="0 0 17 16"><path d="M.5 4C2 3 5 2 8 1c-1.200000000000001 2.4-.4 6.4 1.8 8.4 1 .9 1.8 1.1 2.600000000000001.8-1.2 2.6-3.2 4.800000000000001-5 5.600000000000001-2-.8-6.2-6.4-6.9-11.8z" fill="#606060"></path><path d="M9 .7c1.8-.6 4.6-.7 6.5-.3.9 1.900000000000001-.1 6.4-2.500000000000001 8.100000000000001-2-.3-4.6-4.2-4-7.800000000000001z" fill="#606060"></path></svg>
<svg style="left:259px;top:147px;" width="16" height="16" viewBox="0 0 16 16"><circle cx="8" cy="8" r="7.9" fill="#3e82dc"></circle><circle cx="8" cy="8" r="7" fill="#5a9cff"></circle><path d="M6.600000000000001 2.2C8.4 1.2 12 1.5 13.8 3.2C15.1 4.6 15.3 7 14.9 8.700000000000001L13.5 7.4L12 10.4L10.7 12L9.3 14.7L8.2 12.700000000000001L7.9 10.5L5.4 9.600000000000001L4.7 8L5.9 6.4L6.4 4.6z" fill="#aad400"></path><rect x="6.7" y="5" width="3.5" height="1.2" rx=".6" fill="#5a9cff"></rect><path d="M1 4.7L2.8 4.1L2.2 6L1.5 7.7L.9 7zM1.2 9.8L2 11.2L3.8 12.4L3.4 13.3L1.8 12z" fill="#aad400"></path><circle cx="4.4" cy="2.5" r=".6" fill="#aad400"></circle></svg>
<span class="t " style="left: 265.5px; top: 128px; color: rgb(51, 51, 51); letter-spacing: 0.28px;">[0] TYPO3 9 - Development</span>
<span class="t " style="left: 281.75px; top: 148px; color: rgb(51, 51, 51); letter-spacing: 0.53px;">[1] Home</span>
<div class="a" style="left:527px;top:45px;width:1385px;height:65px;background:#ededed"></div>
<div class="a" style="left:527px;top:109px;width:1385px;height:1px;background:#c3c3c3"></div>
<div class="a" style="left:527px;top:110px;width:1373px;height:826px;background:#fff"></div>
<div class="a" style="left:1900px;top:110px;width:12px;height:826px;background:#f1f1f1"></div>
<div class="a" style="left:1902px;top:110px;width:10px;height:622px;background:#c1c1c1"></div>
<svg style="left:1904.0px;top:925.5px;" width="9" height="5" viewBox="0 0 9 5"><path d="M0 0L9 0L4.5 5z" fill="#505050"></path></svg>
<span class="t " style="left: 1762.7px; top: 53.5px; color: rgb(0, 0, 0); letter-spacing: 0.49px;">Path: /</span>
<svg style="left:1808px;top:54px;" width="16" height="16" viewBox="0 0 16 16"><circle cx="8" cy="8" r="7.9" fill="#3e82dc"></circle><circle cx="8" cy="8" r="7" fill="#5a9cff"></circle><path d="M6.600000000000001 2.2C8.4 1.2 12 1.5 13.8 3.2C15.1 4.6 15.3 7 14.9 8.700000000000001L13.5 7.4L12 10.4L10.7 12L9.3 14.7L8.2 12.700000000000001L7.9 10.5L5.4 9.600000000000001L4.7 8L5.9 6.4L6.4 4.6z" fill="#aad400"></path><rect x="6.7" y="5" width="3.5" height="1.2" rx=".6" fill="#5a9cff"></rect><path d="M1 4.7L2.8 4.1L2.2 6L1.5 7.7L.9 7zM1.2 9.8L2 11.2L3.8 12.4L3.4 13.3L1.8 12z" fill="#aad400"></path><circle cx="4.4" cy="2.5" r=".6" fill="#aad400"></circle></svg>
<span class="t b" style="left: 1828.5px; top: 53.5px; font-size: 14px; color: rgb(0, 0, 0); letter-spacing: 0.51px;">Home [1]</span>
<div class="btn" style="left:551px;top:79px;width:60px"></div>
<div class="btn" style="left:616px;top:79px;width:56px"></div>
<div class="btn" style="left:677px;top:79px;width:56px"></div>
<svg style="left:556px;top:84px;" width="16" height="16" viewBox="0 0 16 16"><path d="M4.2 4.2l7.600000000000001 7.600000000000001M11.8 4.2l-7.600000000000001 7.600000000000001" stroke="#000" stroke-width="2.3"></path></svg>
<svg style="left:621px;top:84px;" width="16" height="16" viewBox="0 0 16 16"><path d="M1.7 1.7h10.3l2.3 2.3v10.3h-12.6z" fill="none" stroke="#000" stroke-width="1.4"></path><rect x="4.4" y="1.7" width="6.4" height="4.2" fill="none" stroke="#000" stroke-width="1.1"></rect><rect x="4" y="9.2" width="8" height="5.1" fill="none" stroke="#000" stroke-width="1.3"></rect><rect x="7.6" y="2.4" width="1.6" height="2.6" fill="#000"></rect></svg>
<svg style="left:682px;top:84px;" width="16" height="16" viewBox="0 0 16 16"><path d="M.9 8c1.8-3 4.2-4.4 7.1-4.4s5.300000000000001 1.4 7.1 4.4c-1.8 3-4.2 4.4-7.1 4.4s-5.300000000000001-1.4-7.1-4.4z" fill="none" stroke="#000" stroke-width="1.4"></path><circle cx="8" cy="7.6" r="3.1" fill="#000"></circle><circle cx="6.9" cy="6.5" r=".9" fill="#eee"></circle></svg>
<span class="t " style="left: 576.4px; top: 84.5px; font-size: 11.5px; letter-spacing: -0.08px;">Close</span>
<span class="t " style="left: 640.7px; top: 84.5px; font-size: 11.5px; letter-spacing: 0.1px;">Save</span>
<span class="t " style="left: 702.6px; top: 84.5px; font-size: 11.5px; letter-spacing: 0.12px;">View</span>
<div class="btn" style="left:1805px;top:79px;width:26px"></div>
<div class="btn" style="left:1836px;top:79px;width:26px"></div>
<div class="btn" style="left:1867px;top:79px;width:26px"></div>
<svg style="left:1810px;top:84px;" width="16" height="16" viewBox="0 0 16 16"><path d="M8.5 5.2h-5.800000000000001v7.500000000000001h11.000000000000002v-3.400000000000001" fill="none" stroke="#000" stroke-width="1.4"></path><path d="M7.6 9.4l6-6" stroke="#000" stroke-width="1.5"></path><path d="M10.2 2h4.6v4.6z" fill="#000"></path></svg>
<svg style="left:1840px;top:83px;" width="18" height="18" viewBox="0 0 16 16"><path d="M8 1.3l2 4.500000000000001 4.9.5-3.7 3.3 1.1 4.8L8 11.900000000000002l-4.3 2.5 1.1-4.8-3.7-3.3 4.9-.5z" fill="none" stroke="#000" stroke-width="1.1" stroke-linejoin="round"></path></svg>
<svg style="left:1872px;top:84px;" width="16" height="16" viewBox="0 0 16 16"><text x="8" y="12.5" font-size="12.5" font-weight="bold" font-family="Liberation Sans" text-anchor="middle" fill="#000">?</text></svg>
<span class="t " style="left: 551.5px; top: 133.5px; font-size: 25.5px; line-height: 30px; height: 30px; color: rgb(17, 17, 17); letter-spacing: -0.35px;">Create new Page Content on page "Home"</span>
<div class="a" style="left:551px;top:185px;width:1325px;height:32px;background:#ededed;border-bottom:1px solid #ccc;border-radius:2px 2px 0 0"></div>
<div class="a" style="left:551px;top:185px;width:73px;height:32px;background:#fafafa;border:1px solid #ccc;border-bottom:0;border-radius:2px 2px 0 0"></div>
<span class="t " style="left: 564.5px; top: 192.5px; letter-spacing: -0.08px;">General</span>
<span class="t " style="left: 638.75px; top: 192.5px; letter-spacing: -0.32px;">Access</span>
<div class="a" style="left:551px;top:217px;width:1325px;height:740px;background:#fafafa;border:1px solid #ccc;border-top:0"></div>
<div class="a" style="left:552px;top:349px;width:1323px;height:1px;background:#ccc"></div>
<div class="a" style="left:552px;top:447px;width:1323px;height:1px;background:#ccc"></div>
<span class="t " style="left: 564.5px; top: 229.75px; font-size: 16.5px; line-height: 20px; height: 20px; color: rgb(34, 34, 34); letter-spacing: 0.17px;">Content Element</span>
<span class="t b" style="left: 564.5px; top: 259px; color: rgb(17, 17, 17); letter-spacing: 0.4px;">Type</span>
<div class="a" style="left:596.5px;top:259px;width:49px;height:17px;background:#f9f2f4;border-radius:2px"></div>
<span class="t mono" style="left: 601.5px; top: 259.5px; color: rgb(199, 37, 78); font-size: 10.5px; letter-spacing: -0.66px;">[CType]</span>
<span class="t b" style="left: 1228.4px; top: 259px; color: rgb(17, 17, 17); letter-spacing: 0.27px;">Column</span>
<div class="a" style="left:1279px;top:259px;width:57px;height:17px;background:#f9f2f4;border-radius:2px"></div>
<span class="t mono" style="left: 1281.8px; top: 259.5px; color: rgb(199, 37, 78); font-size: 10.5px; letter-spacing: 0.07px;">[colPos]</span>
<div class="a" style="left:564px;top:290px;width:33px;height:32px;background:#e6eef8;border:1px solid #66afe9;border-right:0;border-radius:2px 0 0 2px"></div>
<svg style="left:571px;top:298px;" width="18" height="16" viewBox="0 0 18 16"><rect x=".9" y="1.9" width="16.2" height="12.2" fill="none" stroke="#000" stroke-width="1.5"></rect><path d="M6.6 6l-2.200000000000001 2 2.200000000000001 2zM11.4 6l2.200000000000001 2-2.200000000000001 2z" fill="#000"></path></svg>
<div class="a" style="left:596px;top:290px;width:476px;height:32px;background:#fff;border:1px solid #66afe9;border-radius:0 2px 2px 0;box-shadow:0 0 4px rgba(102,175,233,.5)"></div>
<span class="t " style="left: 603.25px; top: 298px; letter-spacing: 0.37px;">A simple header with an image [simple_header]</span>
<svg style="left:1054px;top:302px;" width="10" height="8" viewBox="0 0 10 8"><path d="M1.2 2.2L5 6L8.8 2.2" fill="none" stroke="#111" stroke-width="2"></path></svg>
<div class="a" style="left:1229px;top:290px;width:239px;height:32px;background:#fff;border:1px solid #66afe9;border-radius:2px"></div>
<span class="t " style="left: 1236px; top: 298px; letter-spacing: 0.5px;">Hero [10]</span>
<svg style="left:1450px;top:302px;" width="10" height="8" viewBox="0 0 10 8"><path d="M1.2 2.2L5 6L8.8 2.2" fill="none" stroke="#111" stroke-width="2"></path></svg>
<span class="t b" style="left: 564.5px; top: 366px; color: rgb(17, 17, 17); letter-spacing: 0.32px;">Header</span>
<div class="a" style="left:564px;top:397px;width:480px;height:32px;background:#fff;border:1px solid #66afe9;border-radius:2px"></div>
<span class="t b" style="left: 564.5px; top: 464px; color: rgb(17, 17, 17); letter-spacing: 0.32px;">Header</span>
<div class="a" style="left:564px;top:496px;width:1299px;height:460px;background:#fff;border:1px solid #d1d1d1;box-shadow:0 0 3px rgba(0,0,0,.12)"></div>
<div class="a" style="left:565px;top:497px;width:1297px;height:41px;background:#f8f8f8;border-bottom:1px solid #d1d1d1"></div>
<div class="a" style="left:573px;top:502px;width:90px;height:28px;border:1px solid #d3d3d3;border-radius:3px;background:#fff"></div>
<span class="t " style="left: 584px; top: 508px; font-size: 12px; color: rgb(72, 72, 72); letter-spacing: 0.22px;">Styles</span>
<div class="a" style="left:1050px;top:502px;width:49px;height:28px;border:1px solid #d3d3d3;border-radius:3px;background:#f8f8f8"></div>
<div class="a" style="left:1106px;top:502px;width:58px;height:28px;border:1px solid #d3d3d3;border-radius:3px;background:#f8f8f8"></div>
<div class="a" style="left:1170px;top:502px;width:236px;height:28px;border:1px solid #d3d3d3;border-radius:3px;background:#f8f8f8"></div>
<div class="a" style="left:1412px;top:502px;width:37px;height:28px;border:1px solid #d3d3d3;border-radius:3px;background:#f8f8f8"></div>
<div class="a" style="left:1455px;top:502px;width:93px;height:28px;border:1px solid #d3d3d3;border-radius:3px;background:#f8f8f8"></div>
<div class="a" style="left:1554px;top:502px;width:58px;height:28px;border:1px solid #d3d3d3;border-radius:3px;background:#f8f8f8"></div>
<div class="a" style="left:1618px;top:502px;width:71px;height:28px;border:1px solid #d3d3d3;border-radius:3px;background:#f8f8f8"></div>
<svg style="left:1076px;top:508px;opacity:1" width="16" height="16" viewBox="0 0 16 16"><path d="M3 3h10M1.5 6h13M4 9h8M1.5 12h13" stroke="#000" stroke-width="1.8"></path></svg>
<svg style="left:1113px;top:508px;opacity:1" width="16" height="16" viewBox="0 0 16 16"><g fill="none" stroke="#222" stroke-width="1.5"><rect x="1" y="5.2" width="8.6" height="5.600000000000001" rx="2.8"></rect><rect x="6.4" y="5.2" width="8.6" height="5.600000000000001" rx="2.8"></rect></g></svg>
<svg style="left:1141px;top:508px;opacity:0.35" width="16" height="16" viewBox="0 0 16 16"><g fill="none" stroke="#222" stroke-width="1.5"><rect x="1" y="3.8" width="8.6" height="5.2" rx="2.6"></rect><rect x="6.4" y="3.8" width="8.6" height="5.2" rx="2.6"></rect></g><path d="M10.5 10.5l4 4M14.5 10.5l-4 4" stroke="#222" stroke-width="1.5"></path></svg>
<svg style="left:1177px;top:508px;opacity:0.35" width="16" height="16" viewBox="0 0 16 16"><path d="M4.5 1l5.5 10M11.5 1l-5.500000000000001 10" stroke="#222" stroke-width="1.4"></path><circle cx="4.6" cy="12.6" r="2" fill="none" stroke="#222" stroke-width="1.3"></circle><circle cx="11.4" cy="12.6" r="2" fill="none" stroke="#222" stroke-width="1.3"></circle></svg>
<svg style="left:1204px;top:508px;opacity:0.35" width="16" height="16" viewBox="0 0 16 16"><path d="M2 1.5h6l2 2v7.500000000000001h-8z" fill="none" stroke="#222" stroke-width="1.2"></path><path d="M6.500000000000001 5.5h5l2.500000000000001 2.500000000000001v7h-7.500000000000001z" fill="#f8f8f8" stroke="#222" stroke-width="1.2"></path></svg>
<svg style="left:1233px;top:508px;opacity:1" width="16" height="16" viewBox="0 0 16 16"><path d="M5 2.5h-2.500000000000001v11.500000000000002h3" fill="none" stroke="#222" stroke-width="1.2"></path><path d="M11 2.5h2.500000000000001v3" fill="none" stroke="#222" stroke-width="1.2"></path><rect x="5.2" y="1" width="5.600000000000001" height="2.600000000000001" rx=".8" fill="#222"></rect><rect x="6.6" y="6.4" width="7.800000000000001" height="9" fill="none" stroke="#222" stroke-width="1.2"></rect><path d="M8.2 9h4.6M8.2 11h4.6M8.2 13h4.6" stroke="#222" stroke-width="1"></path></svg>
<svg style="left:1261px;top:508px;opacity:1" width="16" height="16" viewBox="0 0 16 16"><path d="M5 2.5h-2.500000000000001v11.500000000000002h3" fill="none" stroke="#222" stroke-width="1.2"></path><path d="M11 2.5h2.500000000000001v3" fill="none" stroke="#222" stroke-width="1.2"></path><rect x="5.2" y="1" width="5.600000000000001" height="2.600000000000001" rx=".8" fill="#222"></rect><rect x="6.6" y="6.4" width="7.800000000000001" height="9" fill="none" stroke="#222" stroke-width="1.2"></rect><path d="M8.4 9h4.2M10.5 9v4.6" stroke="#222" stroke-width="1.3"></path></svg>
<svg style="left:1289px;top:508px;opacity:1" width="16" height="16" viewBox="0 0 16 16"><path d="M5 2.5h-2.500000000000001v11.500000000000002h3" fill="none" stroke="#222" stroke-width="1.2"></path><path d="M11 2.5h2.500000000000001v3" fill="none" stroke="#222" stroke-width="1.2"></path><rect x="5.2" y="1" width="5.600000000000001" height="2.600000000000001" rx=".8" fill="#222"></rect><rect x="6.6" y="6.4" width="7.800000000000001" height="9" fill="none" stroke="#222" stroke-width="1.2"></rect><path d="M8.2 9l.9 4.2 1.4-3.2 1.4 3.2.9-4.2" fill="none" stroke="#222" stroke-width="1"></path></svg>
<svg style="left:1321px;top:508px;opacity:1" width="16" height="16" viewBox="0 0 16 16"><path d="M4.5 2h9M9.6 2l-3.2 10.5" stroke="#000" stroke-width="2"></path><path d="M2 13.5h7" stroke="#000" stroke-width="1.4"></path><path d="M10.6 10.6l4 4M14.6 10.6l-4 4" stroke="#000" stroke-width="1.5"></path></svg>
<svg style="left:1354px;top:508px;opacity:0.35" width="16" height="16" viewBox="0 0 16 16"><path d="M1 7l6-5v3c4.500000000000001 0 8 2 8 8-1.600000000000001-3.2-4-4-8-4v3z" fill="#222"></path></svg>
<svg style="left:1382px;top:508px;opacity:0.35" width="16" height="16" viewBox="0 0 16 16"><path d="M15 7l-6-5v3c-4.500000000000001 0-8 2-8 8 1.600000000000001-3.2 4-4 8-4v3z" fill="#222"></path></svg>
<svg style="left:1417px;top:508px;opacity:1" width="16" height="16" viewBox="0 0 16 16"><text x="6" y="7.500000000000001" font-size="7.500000000000001" font-family="Liberation Sans" text-anchor="middle" fill="#222" letter-spacing="-.2">ABC</text><path d="M2.5 11l3 3 6-6.5" fill="none" stroke="#000" stroke-width="2"></path></svg>
<svg style="left:1461px;top:508px;opacity:1" width="16" height="16" viewBox="0 0 16 16"><rect x="1" y="1.5" width="14" height="3" fill="#222"></rect><path d="M1.5 4.5v10h13v-10M1.5 9.5h13M6 4.5v10M10.4 4.5v10" fill="none" stroke="#222" stroke-width="1.2"></path></svg>
<svg style="left:1496px;top:508px;opacity:1" width="16" height="16" viewBox="0 0 16 16"><path d="M2 1.5h12M2 4h12M2 12h12M2 14.5h12" stroke="#666" stroke-width="1"></path><path d="M1 8h14" stroke="#000" stroke-width="2"></path></svg>
<svg style="left:1525px;top:508px;opacity:1" width="16" height="16" viewBox="0 0 16 16"><text x="8" y="14" font-size="17" font-family="Liberation Serif" font-weight="bold" text-anchor="middle" fill="#111">Ω</text></svg>
<svg style="left:1561px;top:508px;opacity:1" width="16" height="16" viewBox="0 0 16 16"><path d="M1.5 1.5h4.6l-1.5 1.5 2.4 2.4-1.6 1.6-2.400000000000001-2.400000000000001-1.5 1.5zM14.5 1.5v4.6l-1.5-1.5-2.4 2.4-1.6-1.6 2.400000000000001-2.400000000000001-1.5-1.5zM1.5 14.5v-4.6l1.5 1.5 2.4-2.4 1.6 1.6-2.400000000000001 2.400000000000001 1.5 1.5zM14.5 14.5h-4.6l1.5-1.5-2.4-2.4 1.6-1.6 2.400000000000001 2.400000000000001 1.5-1.5z" fill="#111"></path></svg>
<svg style="left:1589px;top:508px;opacity:1" width="16" height="16" viewBox="0 0 16 16"><path d="M1.5 2h9M1.5 2v9.5M10.5 2v9.5" fill="none" stroke="#222" stroke-width="1.1" stroke-dasharray="1.5 1.2"></path><rect x="1.7" y="12.4" width="8.6" height="2.6" rx="1.2" fill="none" stroke="#222" stroke-width="1.1"></rect><rect x="12.2" y="1.6" width="2.6" height="13.4" rx="1.2" fill="none" stroke="#222" stroke-width="1.1"></rect></svg>
<svg style="left:1624px;top:508px;opacity:1" width="16" height="16" viewBox="0 0 16 16"><path d="M3 1.5h6.500000000000001l3.5 3.5v9.5h-10z" fill="none" stroke="#222" stroke-width="1.2"></path><path d="M7.2 7.6l-1.900000000000001 2 1.900000000000001 2M8.8 7.6l1.900000000000001 2-1.900000000000001 2" fill="none" stroke="#222" stroke-width="1.1"></path></svg>
<svg style="left:1437.5px;top:515.5px;" width="5" height="3" viewBox="0 0 5 3"><path d="M0 0L5 0L2.5 3z" fill="#333"></path></svg>
<svg style="left:1480.5px;top:515.5px;" width="5" height="3" viewBox="0 0 5 3"><path d="M0 0L5 0L2.5 3z" fill="#333"></path></svg>
<span class="t " style="left: 1643px; top: 508px; font-size: 12px; color: rgb(72, 72, 72); letter-spacing: 0.16px;">Source</span>
<div class="a" style="left:596px;top:322px;width:476px;height:321.5px;background:#fff;border:1px solid #7a9fd8;border-top:0"></div>
<div class="a" style="left:597px;top:626.5px;width:457px;height:16px;background:#1e90ff"></div>
<span class="t " style="left: 620.5px; top: 322.5px; color: rgb(43, 43, 43); letter-spacing: 0.32px;">Categorized content [menu_categorized_content]</span>
<span class="t " style="left: 620.5px; top: 338.5px; color: rgb(43, 43, 43); letter-spacing: 0.23px;">Categorized pages [menu_categorized_pages]</span>
<span class="t " style="left: 620.5px; top: 354.5px; color: rgb(43, 43, 43); letter-spacing: 0.19px;">Pages [menu_pages]</span>
<span class="t " style="left: 620.5px; top: 370.5px; color: rgb(43, 43, 43); letter-spacing: 0.25px;">Subpages [menu_subpages]</span>
<span class="t " style="left: 620.5px; top: 386.5px; color: rgb(43, 43, 43); letter-spacing: 0.32px;">Recently updated pages [menu_recently_updated]</span>
<span class="t " style="left: 620.5px; top: 402.5px; color: rgb(43, 43, 43); letter-spacing: 0.26px;">Related pages [menu_related_pages]</span>
<span class="t " style="left: 620.5px; top: 418.5px; color: rgb(43, 43, 43); letter-spacing: 0.34px;">Section index [menu_section]</span>
<span class="t " style="left: 620.5px; top: 434.5px; color: rgb(43, 43, 43); letter-spacing: 0.27px;">Section index of subpages from selected pages [menu_section_pages]</span>
<span class="t " style="left: 620.5px; top: 450.5px; color: rgb(43, 43, 43); letter-spacing: 0.43px;">Sitemap [menu_sitemap]</span>
<span class="t " style="left: 620.5px; top: 466.5px; color: rgb(43, 43, 43); letter-spacing: 0.28px;">Sitemaps of selected pages [menu_sitemap_pages]</span>
<span class="t b" style="left: 605.5px; top: 482.5px; color: rgb(34, 34, 34); letter-spacing: 0.27px;">Special</span>
<span class="t " style="left: 620.5px; top: 498.5px; color: rgb(43, 43, 43); letter-spacing: 0.39px;">Insert Records [shortcut]</span>
<span class="t " style="left: 620.5px; top: 514.5px; color: rgb(43, 43, 43); letter-spacing: 0.46px;">Insert Plugin [list]</span>
<span class="t " style="left: 620.5px; top: 530.5px; color: rgb(43, 43, 43); letter-spacing: 0.49px;">Divider [div]</span>
<span class="t " style="left: 620.5px; top: 546.5px; color: rgb(43, 43, 43); letter-spacing: 0.36px;">HTML [html]</span>
<span class="t " style="left: 620.5px; top: 562.5px; color: rgb(43, 43, 43); letter-spacing: 0.48px;">Form [form_formframework]</span>
<span class="t b" style="left: 605.5px; top: 578.5px; color: rgb(34, 34, 34); letter-spacing: 0.33px;">Forms</span>
<span class="t " style="left: 620.5px; top: 594.5px; color: rgb(43, 43, 43); letter-spacing: 0.39px;">Login [login]</span>
<span class="t " style="left: 620.5px; top: 610.5px; color: rgb(43, 43, 43); letter-spacing: 0.38px;">Header (CE Title) [header_with_title]</span>
<span class="t " style="left: 620.5px; top: 626.5px; color: rgb(255, 255, 255); letter-spacing: 0.37px;">A simple header with an image [simple_header]</span>
<div class="a" style="left:1054px;top:322px;width:17px;height:320.5px;background:#f1f1f1"></div>
<div class="a" style="left:1056px;top:435px;width:13px;height:190.5px;background:#c1c1c1"></div>
<svg style="left:1058.0px;top:329.5px;" width="9" height="5" viewBox="0 0 9 5"><path d="M0 5L4.5 0L9 5z" fill="#505050"></path></svg>
<svg style="left:1058.0px;top:631.5px;" width="9" height="5" viewBox="0 0 9 5"><path d="M0 0L9 0L4.5 5z" fill="#a3a3a3"></path></svg>
<div class="a" style="left:596px;top:614px;width:496.5px;height:40.5px;border:3px solid #ff1482;border-radius:2px;"></div>

</body></html>
